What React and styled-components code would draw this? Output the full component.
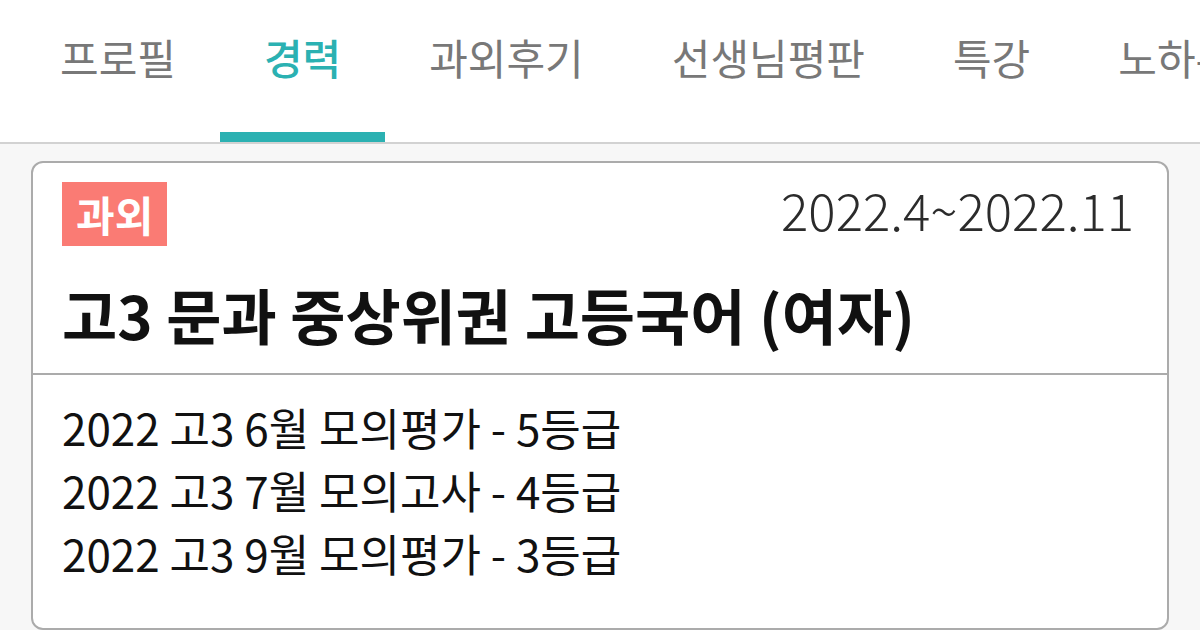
import React from "react";
import styled, { createGlobalStyle } from "styled-components";

const GlobalStyle = createGlobalStyle`
  * { box-sizing: border-box; }
  html, body { margin: 0; padding: 0; }
  body {
    background: #f7f7f7;
    font-family: "Noto Sans CJK KR", "Noto Sans", sans-serif;
    width: 1200px;
    height: 630px;
    overflow: hidden;
  }
`;

const Page = styled.div`
  width: 1200px;
  height: 630px;
  display: flex;
  flex-direction: column;
  background: #f7f7f7;
  overflow: hidden;
`;

const TabBar = styled.nav`
  flex: 0 0 auto;
  height: 144px;
  background: #ffffff;
  border-bottom: 2px solid #d2d2d2;
  display: flex;
  align-items: stretch;
  padding-left: 16px;
  overflow: hidden;
  white-space: nowrap;
`;

const Tab = styled.div`
  position: relative;
  flex: 0 0 auto;
  padding: 0 44px 30px;
  display: flex;
  align-items: center;
  font-size: 42px;
  font-weight: ${(p) => (p.$active ? 500 : 400)};
  color: ${(p) => (p.$active ? "#2bb1b2" : "#787878")};

  &::after {
    content: "";
    display: ${(p) => (p.$active ? "block" : "none")};
    position: absolute;
    left: 0;
    right: 0;
    bottom: -2px;
    height: 12px;
    background: #2bb1b2;
  }
`;

const Content = styled.main`
  flex: 1 1 auto;
  padding: 17px 31px 0;
  display: flex;
  flex-direction: column;
`;

const Card = styled.section`
  flex: 1 1 auto;
  background: #ffffff;
  border: 2px solid #ababab;
  border-radius: 12px;
  display: flex;
  flex-direction: column;
  overflow: hidden;
`;

const CardHeader = styled.header`
  height: 212px;
  padding: 19px 33px 0 29px;
  border-bottom: 2px solid #ababab;
  display: flex;
  flex-direction: column;
`;

const MetaRow = styled.div`
  display: flex;
  align-items: center;
  justify-content: space-between;
`;

const Badge = styled.span`
  height: 64px;
  padding: 0 14px;
  display: inline-flex;
  align-items: center;
  background: #fa7b74;
  color: #ffffff;
  font-size: 42px;
  font-weight: 700;
  line-height: 1;
`;

const Period = styled.span`
  padding-bottom: 10px;
  font-size: 51px;
  font-weight: 300;
  color: #2b2b2b;
  line-height: 1;
`;

const Title = styled.h1`
  margin: 32px 0 0;
  font-size: 60px;
  font-weight: 700;
  color: #111111;
  line-height: 72px;
  white-space: nowrap;
`;

const CardBody = styled.ul`
  list-style: none;
  margin: 0;
  padding: 21px 29px 0;
`;

const Record = styled.li`
  font-size: 44px;
  font-weight: 400;
  color: #111111;
  line-height: 63px;
  white-space: nowrap;
`;

const tabs = ["프로필", "경력", "과외후기", "선생님평판", "특강", "노하우"];
const records = [
  "2022 고3 6월 모의평가 - 5등급",
  "2022 고3 7월 모의고사 - 4등급",
  "2022 고3 9월 모의평가 - 3등급",
];

export default function App() {
  return (
    <>
      <GlobalStyle />
      <Page>
        <TabBar>
          {tabs.map((t) => (
            <Tab key={t} $active={t === "경력"}>
              {t}
            </Tab>
          ))}
        </TabBar>
        <Content>
          <Card>
            <CardHeader>
              <MetaRow>
                <Badge>과외</Badge>
                <Period>2022.4~2022.11</Period>
              </MetaRow>
              <Title>고3 문과 중상위권 고등국어 (여자)</Title>
            </CardHeader>
            <CardBody>
              {records.map((r) => (
                <Record key={r}>{r}</Record>
              ))}
            </CardBody>
          </Card>
        </Content>
      </Page>
    </>
  );
}
